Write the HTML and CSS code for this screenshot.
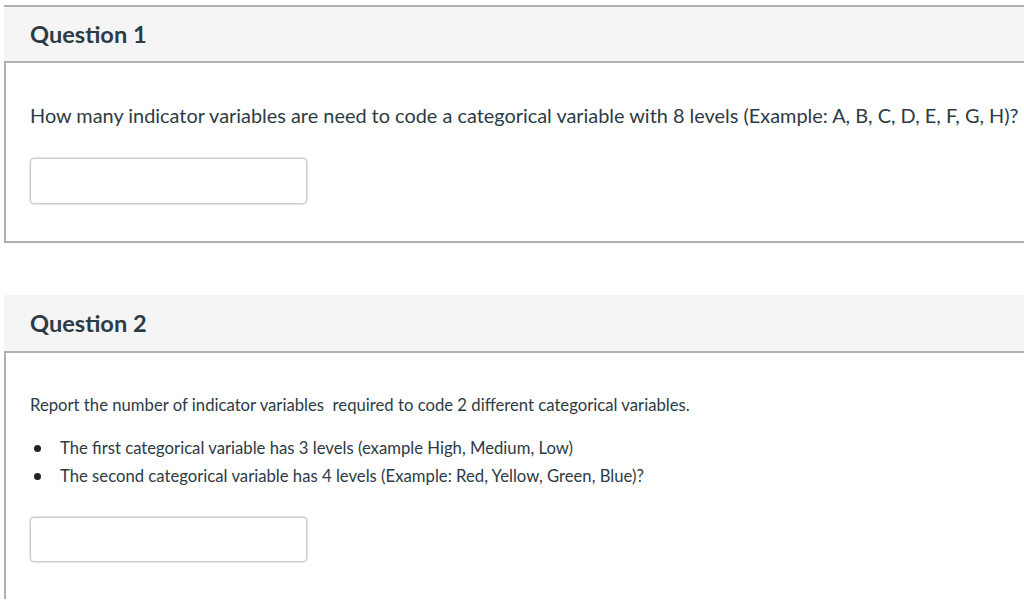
FILE: index.html
```html
<!DOCTYPE html>
<html lang="en">
<head>
    <meta charset="UTF-8">
    <meta name="viewport" content="width=device-width, initial-scale=1.0">
    <title>Quiz</title>
    <link rel="stylesheet" href="styles.css">
</head>
<body>
    <div class="question first">
        <div class="question-header">
            <h2>Question 1</h2>
        </div>
        <div class="question-body">
            <p class="text-large">How many indicator variables are need to code a categorical variable with 8 levels (Example: A, B, C, D, E, F, G, H)?</p>
            <input type="text" class="answer">
        </div>
    </div>

    <div class="question second">
        <div class="question-header">
            <h2>Question 2</h2>
        </div>
        <div class="question-body">
            <p class="text-small">Report the number of indicator variables &nbsp;required to code 2 different categorical variables.</p>
            <ul class="bullets">
                <li>The first categorical variable has 3 levels (example High, Medium, Low)</li>
                <li>The second categorical variable has 4 levels (Example: Red, Yellow, Green, Blue)?</li>
            </ul>
            <input type="text" class="answer answer-2">
        </div>
    </div>
</body>
</html>
```

FILE: styles.css
```css
body {
    margin: 0;
    background-color: #fff;
    color: #2d3b45;
    font-family: Lato, "Liberation Sans", sans-serif;
    overflow: hidden;
}

.question {
    margin-left: 4px;
    width: 1040px;
}

.question.first {
    margin-top: 5px;
}

.question.second {
    margin-top: 52px;
}

.question-header {
    display: flex;
    align-items: center;
    height: 54px;
    padding-left: 26px;
    background-color: #f5f5f5;
    border-bottom: 2px solid #b0b0b0;
}

.first .question-header {
    border-top: 2px solid #b0b0b0;
}

.second .question-header {
    height: 56px;
}

.question-header h2 {
    margin: 0;
    font-size: 23.6px;
    font-weight: 700;
    color: #2d3b45;
}

.question-body {
    padding: 40px 24px 37px 24px;
    border-left: 2px solid #b0b0b0;
    border-bottom: 2px solid #b0b0b0;
}

.second .question-body {
    padding-top: 42px;
    border-bottom: none;
}

.text-large {
    margin: 0;
    font-size: 19.9px;
    line-height: 24px;
    white-space: nowrap;
}

.text-small {
    margin: 0;
    font-size: 16.7px;
    line-height: 20px;
}

.bullets {
    list-style: none;
    margin: 19px 0 0 0;
    padding: 0 0 0 4px;
    font-size: 16.7px;
    line-height: 28px;
}

.bullets li {
    display: flex;
    align-items: center;
    gap: 19px;
}

.bullets li::before {
    content: "";
    width: 7px;
    height: 7px;
    border-radius: 50%;
    background-color: #222;
}

.answer {
    display: block;
    box-sizing: border-box;
    width: 277px;
    height: 46px;
    margin-top: 31px;
    border: 1px solid #c7cdd1;
    border-radius: 4px;
    box-shadow: 0 0 0 1px #e6e6e6;
    background-color: #fff;
}

.answer-2 {
    margin-top: 27px;
    height: 45px;
}
```
